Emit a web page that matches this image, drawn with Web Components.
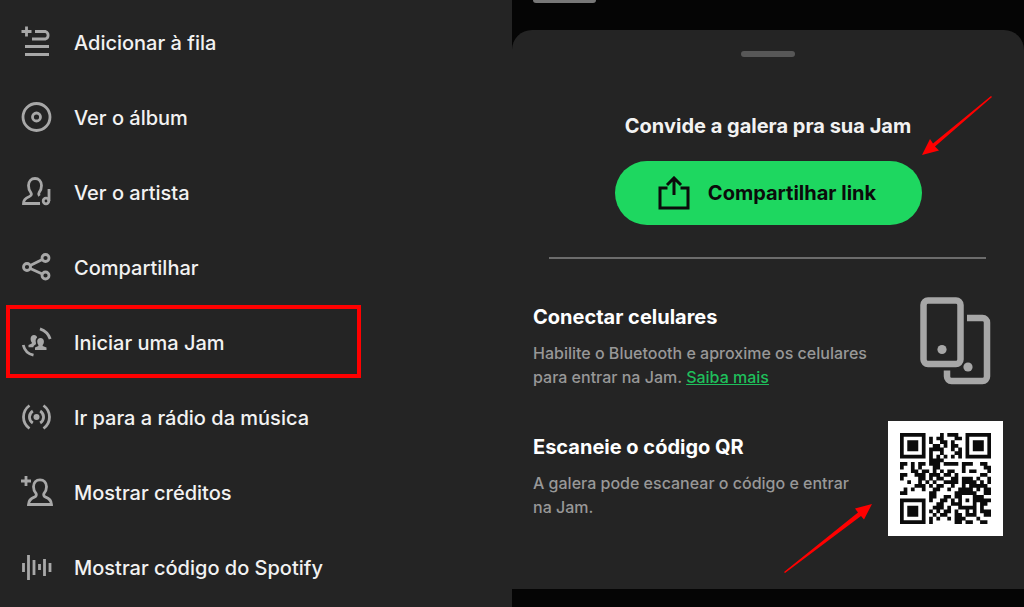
<!DOCTYPE html>
<html lang="pt-BR">
<head>
<meta charset="utf-8">
<meta name="viewport" content="width=device-width, initial-scale=1">
<title>Iniciar uma Jam</title>
<style>
  html, body { margin: 0; background: #000; }
  body { font-family: Inter, "Liberation Sans", sans-serif; color: #f2f2f2; }
</style>
</head>
<body>
<jam-page></jam-page>
<script>
const icons = {
  queue: '<path d="M6.500 .5v10M1.500 5.500h10"/><path d="M15 5.500h10.500a4 4 0 0 1 0 7.500H12"/><path d="M5 20.500h24M5 28.500h24"/>',
  album: '<circle cx="16.500" cy="16" r="13.500"/><circle cx="16.500" cy="16" r="4"/>',
  artist: '<path d="M20 27.500H3.500c0-3.500 2-5.500 5.500-6.800 2.200-.9 3-2.200 1.800-4.200C8.800 14 8.500 12 8.500 9.500c0-4.300 2.800-7 6.500-7s6.500 2.700 6.500 7c0 2.500-.5 4.500-2.300 6.800-.8 1.200-.6 2.500.2 3.600"/><circle cx="26" cy="25" r="2.800"/><path d="M29 25V13"/>',
  share: '<circle cx="7" cy="16" r="3.500"/><circle cx="25.500" cy="7" r="3.500"/><circle cx="25.500" cy="24.500" r="3.500"/><path d="M10.200 14.400 22.300 8.600M10.200 17.600l12.100 5.500"/>',
  jam: '<path d="M20 2.800c5 1.700 8.700 5.500 10.200 10.200M3.200 19c1.200 5 5 9 10.300 10.200"/><g fill="currentColor" stroke="none"><path d="M20.500 12c2.100 0 3.400 1.500 3.400 3.500 0 1.500-.4 2.500-1.200 3.400v1.200l3.800 1.500V24h-11.500v-2.400l3.400-1.500v-1.200c-.8-.9-1.200-2-1.200-3.400 0-2 1.200-3.500 3.300-3.500z"/><path d="M14 9c1.700 0 2.900 1 3.100 2.500-1.300 1.200-1.700 2.600-1.300 4.500.3 1.300.4 2.100-.5 2.700-1.200.7-1.800 1.300-2 2.600H8.500v-2.200l3.300-1.600v-1.200c-.8-.9-1.200-2-1.200-3.600 0-2.200 1.500-3.700 3.400-3.700z"/></g>',
  radio: '<path d="M9.500 4.500c-8 6-8 17 0 23M23.500 4.500c8 6 8 17 0 23M12.800 10c-4.500 3-4.500 9 0 12M20.200 10c4.500 3 4.500 9 0 12"/><circle cx="16.500" cy="16" r="3" fill="currentColor" stroke="none"/>',
  credits: '<path d="M6 0v10M1 5h10"/><path d="M8.500 28.500h23c-.2-4-2-6-5.800-7.400-2-.8-2.600-2.200-1.500-4 1.700-2 2.300-3.600 2.300-6.300 0-4.300-2.700-7-6.500-7s-6.500 2.700-6.500 7c0 2.700.6 4.300 2.300 6.300 1.100 1.800.5 3.200-1.500 4C10.500 22.500 8.700 24.500 8.500 28.500z"/>',
  code: '<path d="M3.500 12v9M8.500 4v25M14 9v15M19.500 13v6M24.500 8v17M30 12v9"/>'
};

const define = (name, render) => customElements.define(name, class extends HTMLElement {
  connectedCallback() {
    if (this.shadowRoot) return;
    this.attachShadow({ mode: 'open' }).innerHTML = render(this);
  }
});

define('line-icon', el => `
  <style>
    :host { display: block; flex: none; width: 32px; height: 32px; color: #a8a8a8; }
    svg { display: block; overflow: visible; fill: none; stroke: currentColor; stroke-width: 2.800; }
  </style>
  <svg viewBox="0 0 32 32" width="32" height="32" aria-hidden="true">${icons[el.getAttribute('name')]}</svg>`);

define('menu-item', el => `
  <style>
    :host { display: block; position: relative; }
    button { display: flex; align-items: center; gap: 22px; width: 100%; height: 75px; padding: 0 20px; border: 0;
      background: none; color: inherit; font: 500 20px/28px Inter, "Liberation Sans", sans-serif; text-align: left; cursor: pointer; }
    span { padding-top: 2px; }
    :host([highlighted])::after { content: ""; position: absolute; left: 6px; top: 1px; bottom: 1px; width: 70%;
      max-width: 355px; box-sizing: border-box; border: 4px solid #f00; pointer-events: none; }
  </style>
  <button type="button"><line-icon name="${el.getAttribute('icon')}"></line-icon><span><slot></slot></span></button>`);

define('track-menu', () => `
  <style>
    :host { display: block; padding-top: 4px; background: #242424; }
  </style>
  <nav aria-label="Opções da música">
    <menu-item icon="queue">Adicionar à fila</menu-item>
    <menu-item icon="album">Ver o álbum</menu-item>
    <menu-item icon="artist">Ver o artista</menu-item>
    <menu-item icon="share">Compartilhar</menu-item>
    <menu-item icon="jam" highlighted>Iniciar uma Jam</menu-item>
    <menu-item icon="radio">Ir para a rádio da música</menu-item>
    <menu-item icon="credits">Mostrar créditos</menu-item>
    <menu-item icon="code">Mostrar código do Spotify</menu-item>
  </nav>`);

define('share-button', () => `
  <style>
    :host { display: block; }
    button { display: flex; align-items: center; justify-content: center; gap: 18px; width: 307px; height: 64px; padding: 0 2px 0 0;
      border: 0; border-radius: 32px; background: #1ed760; color: #0b0b0b; font: 700 20px/28px Inter, "Liberation Sans", sans-serif; cursor: pointer; }
    svg { display: block; fill: none; stroke: currentColor; stroke-width: 3; }
  </style>
  <button type="button">
    <svg width="32" height="34" viewBox="0 0 32 34" aria-hidden="true"><path d="M9.500 12H2v20h28V12h-7.500M16 19V3M9 9l7-7 7 7"/></svg>
    <span><slot></slot></span>
  </button>`);

define('phones-icon', () => `
  <style>
    :host { display: block; width: 71px; height: 88px; margin-right: 12px; color: #a7a7a7; }
    svg { display: block; fill: none; stroke: currentColor; stroke-width: 6.500; }
  </style>
  <svg width="71" height="88" viewBox="0 0 71 88" aria-hidden="true">
    <rect x="3.500" y="3.500" width="37" height="63.500" rx="4.500"/>
    <path d="M47 21h15.500a4.500 4.500 0 0 1 4.500 4.500v54a4.500 4.500 0 0 1-4.500 4.500h-31a4.500 4.500 0 0 1-4.500-4.500V73.500"/>
    <g fill="currentColor" stroke="none"><circle cx="22" cy="52.500" r="4.600"/><circle cx="48" cy="70" r="4.600"/></g>
  </svg>`);

const qrRows = [
  '1111111000010111001111111',
  '1000001010110001101000001',
  '1011101010011010001011101',
  '1011101001101011001011101',
  '1011101011110010101011101',
  '1000001010010001101000001',
  '1111111010101010101111111',
  '0000000011110000000000000',
  '1101011011101111011100110',
  '1001010001100000010000011',
  '0001101101010110010110001',
  '1100111011101101000000110',
  '1000011010110011011101001',
  '0010010101001111011110101',
  '0000111010110010010111110',
  '0101001001100100111101011',
  '1100000011000001111110011',
  '0000000011001101100011100',
  '1111111010011010101011111',
  '1000001000110011100010110',
  '1011101001110100111110100',
  '1011101010101101001010111',
  '1011101001011001101110011',
  '1000001010100101110001000',
  '1111111010000001101100110'
];

define('qr-code', () => `
  <style>
    :host { display: block; width: 115px; height: 115px; box-sizing: border-box; padding: 12px; background: #fff; }
    svg { display: block; width: 100%; height: 100%; }
  </style>
  <svg viewBox="0 0 25 25" role="img" aria-label="Código QR"><path fill="#0b0b0b" d="${
    qrRows.map((row, y) => [...row].map((cell, x) => cell === '1' ? `M${x} ${y}h1.02v1.02h-1.02z` : '').join('')).join('')
  }"/></svg>`);

define('jam-option', () => `
  <style>
    :host { display: flex; justify-content: space-between; gap: 16px; padding: 0 21px; }
    .text { flex: 1; min-width: 0; max-width: 336px; padding-top: var(--text-top); }
    h2 { margin: 0 0 10px; font-size: 20px; line-height: 28px; font-weight: 700; color: #fff; }
    p { margin: 0; font-size: 16px; line-height: 24px; font-weight: 500; color: #989898; }
  </style>
  <div class="text"><h2><slot name="title"></slot></h2><p><slot></slot></p></div>
  <slot name="media"></slot>`);

define('red-arrow', el => {
  const up = el.hasAttribute('up');
  return `
  <style>
    :host { display: block; position: absolute; pointer-events: none; }
    svg { display: block; fill: #f00; }
  </style>
  ${up
    ? '<svg width="88" height="69" viewBox="0 0 88 69" aria-hidden="true"><path d="M0 68 74 8.500 71 4.500 88 0 80 15.500 77 12 1 69z"/></svg>'
    : '<svg width="70" height="59" viewBox="0 0 70 59" aria-hidden="true"><path d="M0 59 8 43 11 47.500 69 0 70 1 13 50.500 17 54.500z"/></svg>'}`;
});

define('jam-sheet', () => `
  <style>
    :host { display: block; background: #050505; }
    .behind { height: 30px; padding-left: 21px; }
    .behind i { display: block; width: 63px; height: 3px; border-radius: 0 0 4px 4px; background: #777; }
    .sheet { background: #242424; border-radius: 20px 20px 0 0; padding: 21px 0 53px; }
    .handle { width: 54px; height: 6px; margin: 0 auto; border-radius: 3px; background: #575757; }
    h1 { margin: 55px 0 21px; font-size: 20px; line-height: 28px; font-weight: 700; text-align: center; }
    .share { position: relative; display: flex; justify-content: center; }
    .share red-arrow { right: 32px; top: -65px; }
    hr { height: 2px; margin: 32px 38px 38px 37px; border: 0; background: #6c6c6c; }
    .first { --text-top: 6px; }
    .second { --text-top: 12px; position: relative; margin-top: 32px; }
    .second red-arrow { right: 152px; top: 83px; }
    a { color: #1fbf5b; text-decoration: underline; }
  </style>
  <div class="behind"><i></i></div>
  <section class="sheet">
    <div class="handle"></div>
    <h1>Convide a galera pra sua Jam</h1>
    <div class="share"><share-button>Compartilhar link</share-button><red-arrow></red-arrow></div>
    <hr>
    <jam-option class="first">
      <span slot="title">Conectar celulares</span>
      Habilite o Bluetooth e aproxime os celulares
      <span>para entrar na Jam.</span> <a href="#saiba-mais">Saiba mais</a>
      <phones-icon slot="media"></phones-icon>
    </jam-option>
    <div class="second">
      <jam-option>
        <span slot="title">Escaneie o código QR</span>
        A galera pode escanear o código e entrar na Jam.
        <qr-code slot="media"></qr-code>
      </jam-option>
      <red-arrow up></red-arrow>
    </div>
  </section>`);

define('jam-page', () => `
  <style>
    :host { display: grid; grid-template-columns: minmax(0, 1fr) minmax(0, 1fr); min-height: 100vh; }
  </style>
  <track-menu></track-menu>
  <jam-sheet></jam-sheet>`);
</script>
</body>
</html>
